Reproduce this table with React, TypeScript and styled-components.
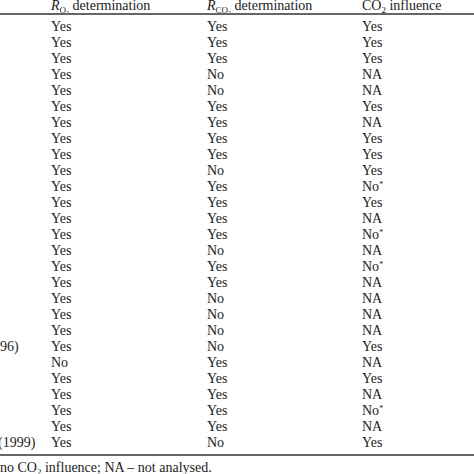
import React from "react";
import styled, { createGlobalStyle } from "styled-components";

const GlobalStyle = createGlobalStyle`
    html, body {
        margin: 0;
        padding: 0;
        background: #fff;
        overflow: hidden;
    }
    body {
        font-family: "Liberation Serif", "Times New Roman", serif;
        font-size: 14px;
        color: #1c1c1c;
    }
`;

const Page = styled.div`
    width: 474px;
    height: 474px;
    overflow: hidden;
    display: flex;
    flex-direction: column;
`;

const Row = styled.div<{ $head?: boolean }>`
    display: grid;
    grid-template-columns: 51px 156px 155px 1fr;
    height: ${p => (p.$head ? "13px" : "16px")};
    line-height: ${p => (p.$head ? "12px" : "16px")};
    white-space: nowrap;
`;

const Cell = styled.div<{ $ref?: boolean }>`
    overflow: hidden;
    margin-left: ${p => (p.$ref ? "-2px" : "0")};
`;

const Rule = styled.div<{ $thick?: boolean }>`
    height: ${p => (p.$thick ? "2px" : "1.5px")};
    background: #666;
    flex-shrink: 0;
`;

const Body = styled.div`
    padding: 4px 0 3px;
`;

const Sub = styled.span`
    font-size: 9px;
    vertical-align: -3px;
    line-height: 0;
    font-style: normal;
`;

const SubSub = styled.span`
    font-size: 6px;
    vertical-align: -2px;
`;

const Star = styled.span`
    font-size: 8px;
    vertical-align: 4px;
    line-height: 0;
`;

const Note = styled.div`
    margin-top: 4px;
    line-height: 16px;
    white-space: nowrap;
`;

type Data = [string, string, string, string];

const rows: Data[] = [
    ["", "Yes", "Yes", "Yes"],
    ["", "Yes", "Yes", "Yes"],
    ["", "Yes", "Yes", "Yes"],
    ["", "Yes", "No", "NA"],
    ["", "Yes", "No", "NA"],
    ["", "Yes", "Yes", "Yes"],
    ["", "Yes", "Yes", "NA"],
    ["", "Yes", "Yes", "Yes"],
    ["", "Yes", "Yes", "Yes"],
    ["", "Yes", "No", "Yes"],
    ["", "Yes", "Yes", "No*"],
    ["", "Yes", "Yes", "Yes"],
    ["", "Yes", "Yes", "NA"],
    ["", "Yes", "Yes", "No*"],
    ["", "Yes", "No", "NA"],
    ["", "Yes", "Yes", "No*"],
    ["", "Yes", "Yes", "NA"],
    ["", "Yes", "No", "NA"],
    ["", "Yes", "No", "NA"],
    ["", "Yes", "No", "NA"],
    ["96)", "Yes", "No", "Yes"],
    ["", "No", "Yes", "NA"],
    ["", "Yes", "Yes", "Yes"],
    ["", "Yes", "Yes", "NA"],
    ["", "Yes", "Yes", "No*"],
    ["", "Yes", "Yes", "NA"],
    ["(1999)", "Yes", "No", "Yes"],
];

// "No*" gets a raised asterisk like the printed table
const Value = ({ v }: { v: string }) =>
    v.endsWith("*") ? <>{v.slice(0, -1)}<Star>*</Star></> : <>{v}</>;

const App = () => {
    return (
        <Page>
            <GlobalStyle />
            <Row $head>
                <Cell />
                <Cell>
                    <i>R</i><Sub>O<SubSub>2</SubSub></Sub> determination
                </Cell>
                <Cell>
                    <i>R</i><Sub>CO<SubSub>2</SubSub></Sub> determination
                </Cell>
                <Cell>
                    CO<Sub>2</Sub> influence
                </Cell>
            </Row>
            <Rule $thick />
            <Body>
                {rows.map((r, i) => (
                    <Row key={i}>
                        <Cell $ref={r[0].startsWith("(")}>{r[0]}</Cell>
                        <Cell><Value v={r[1]} /></Cell>
                        <Cell><Value v={r[2]} /></Cell>
                        <Cell><Value v={r[3]} /></Cell>
                    </Row>
                ))}
            </Body>
            <Rule />
            <Note>
                no CO<Sub>2</Sub> influence; NA – not analysed.
            </Note>
        </Page>
    );
};

export default App;
